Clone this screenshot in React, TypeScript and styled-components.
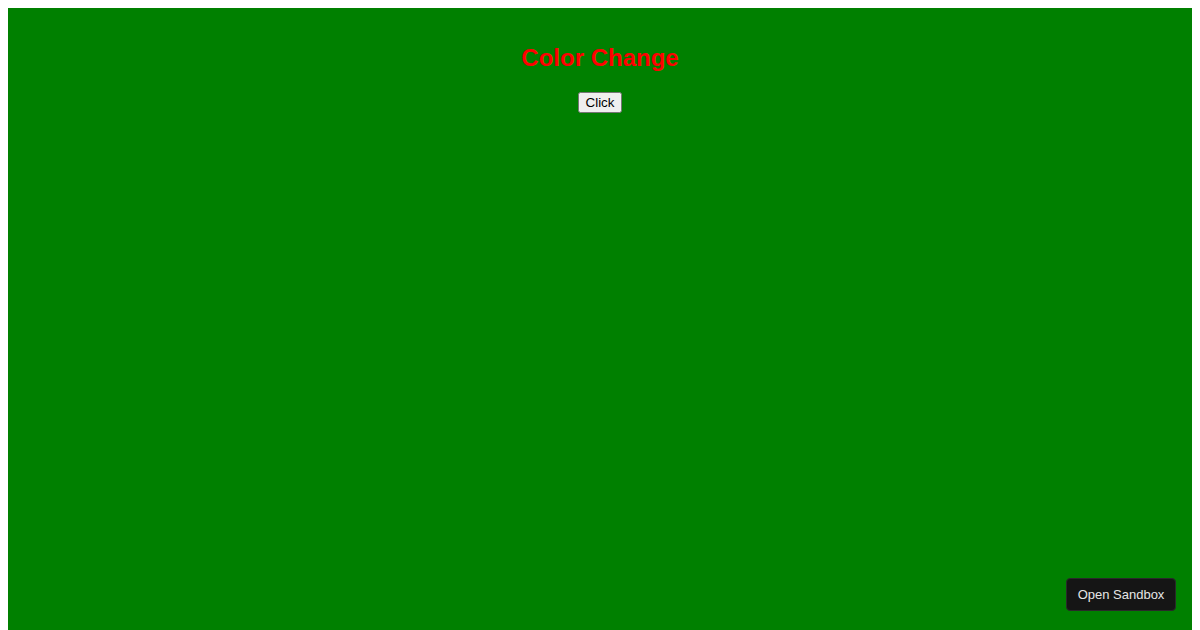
import { useState } from "react";
import styled, { createGlobalStyle } from "styled-components";

const GlobalStyle = createGlobalStyle`
  body {
    margin: 8px;
    font-family: "Liberation Sans", Arial, sans-serif;
  }
`;

const Page = styled.div<{ $bg: string }>`
  min-height: 100vh;
  padding: 16px;
  box-sizing: border-box;
  background-color: ${(p) => p.$bg};
  text-align: center;
`;

const Title = styled.h2<{ $color: string }>`
  margin: 20px 0;
  font-size: 24px;
  font-weight: bold;
  color: ${(p) => p.$color};
`;

const Button = styled.button`
  font-family: "Liberation Sans", Arial, sans-serif;
  font-size: 13.33px;
`;

const SandboxButton = styled.a`
  position: fixed;
  right: 24px;
  bottom: 19px;
  display: flex;
  align-items: center;
  justify-content: center;
  width: 110px;
  height: 33px;
  box-sizing: border-box;
  background-color: #151515;
  border: 1px solid #2a2a2a;
  border-radius: 4px;
  color: #e6e6e6;
  font-family: "Liberation Sans", Arial, sans-serif;
  font-size: 13px;
  text-decoration: none;
  cursor: pointer;
`;

const App = () => {
  const [toggled, setToggled] = useState(false);

  return (
    <>
      <GlobalStyle />
      <Page $bg={toggled ? "red" : "green"}>
        <Title $color={toggled ? "green" : "red"}>Color Change</Title>
        <Button onClick={() => setToggled(!toggled)}>Click</Button>
      </Page>
      <SandboxButton>Open Sandbox</SandboxButton>
    </>
  );
};

export default App;
